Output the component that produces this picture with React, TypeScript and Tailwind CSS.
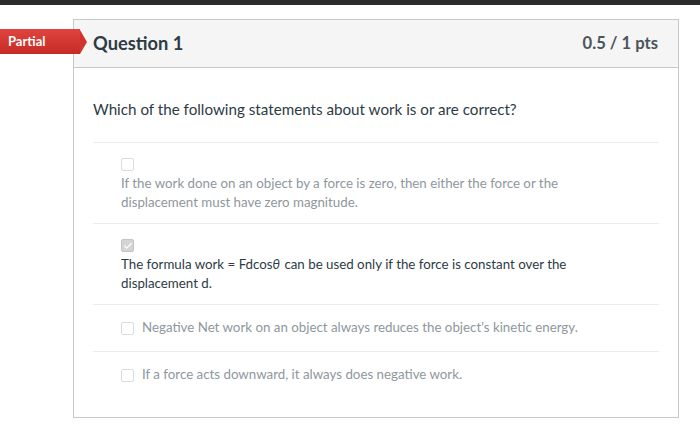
import { Check } from "lucide-react"

type Answer = {
  id: string
  text: React.ReactNode
  selected: boolean
  inline: boolean
}

const answers: Answer[] = [
  {
    id: "a1",
    text: "If the work done on an object by a force is zero, then either the force or the displacement must have zero magnitude.",
    selected: false,
    inline: false,
  },
  {
    id: "a2",
    text: (
      <>
        The formula work = Fdcos<i className="pr-[1px]">θ</i> can be used only if the force is constant over the displacement d.
      </>
    ),
    selected: true,
    inline: false,
  },
  {
    id: "a3",
    text: "Negative Net work on an object always reduces the object's kinetic energy.",
    selected: false,
    inline: true,
  },
  {
    id: "a4",
    text: "If a force acts downward, it always does negative work.",
    selected: false,
    inline: true,
  },
]

function Box({ checked }: { checked: boolean }) {
  return (
    <span
      className={`flex size-[13px] shrink-0 items-center justify-center rounded-[2px] border ${
        checked ? "border-[#c4c4c4] bg-[#d4d4d4]" : "border-[#dcdcdc] bg-white"
      }`}
    >
      {checked && <Check className="size-[10px] text-white" strokeWidth={3} />}
    </span>
  )
}

export default function App() {
  return (
    <div className="relative min-h-[428px] w-[700px] bg-white font-['Lato','Noto_Sans',sans-serif] text-[#2d3b45]">
      <div className="h-[5px] bg-[#2b2b2d]" />

      {/* partial badge */}
      <div className="absolute left-0 top-[29px] z-10 flex h-[25px] items-center">
        <div className="flex h-full w-[80px] items-center bg-gradient-to-b from-[#e0443e] to-[#c72a25] pl-[8px] text-[13px] font-bold text-white">
          Partial
        </div>
        <div className="h-0 w-0 border-y-[12.5px] border-l-[7px] border-y-transparent border-l-[#d2332d]" />
      </div>

      <div className="ml-[73px] mt-[14px] w-[606px] border border-[#c3c9cd] pb-[19px]">
        <div className="flex h-[48px] items-center justify-between border-b border-[#c3c9cd] bg-[#f5f5f5] pl-[19px] pr-[20px]">
          <h2 className="text-[18.3px] font-bold">Question 1</h2>
          <span className="text-[16.6px] font-bold text-[#4a545b]">0.5 / 1 pts</span>
        </div>

        <div className="px-[19px]">
          <p className="pb-[23px] pt-[31px] text-[15.2px] leading-[20px]">
            Which of the following statements about work is or are correct?
          </p>
          <div className="border-t border-[#ededed]">
            {answers.map((a) => (
              <div key={a.id} className="border-b border-[#ededed] px-[28px] last:border-b-0">
                {a.inline ? (
                  <div className="flex h-[46px] items-center gap-[8px]">
                    <Box checked={a.selected} />
                    <span className={`text-[13.3px] ${a.selected ? "text-[#2d3b45]" : "text-[#8e979d]"}`}>{a.text}</span>
                  </div>
                ) : (
                  <div className="pb-[11px] pt-[15px]">
                    <Box checked={a.selected} />
                    <p
                      className={`mt-[3px] max-w-[470px] text-[13.3px] leading-[19px] ${
                        a.selected ? "text-[#2d3b45]" : "text-[#8e979d]"
                      }`}
                    >
                      {a.text}
                    </p>
                  </div>
                )}
              </div>
            ))}
          </div>
        </div>
      </div>
    </div>
  )
}
